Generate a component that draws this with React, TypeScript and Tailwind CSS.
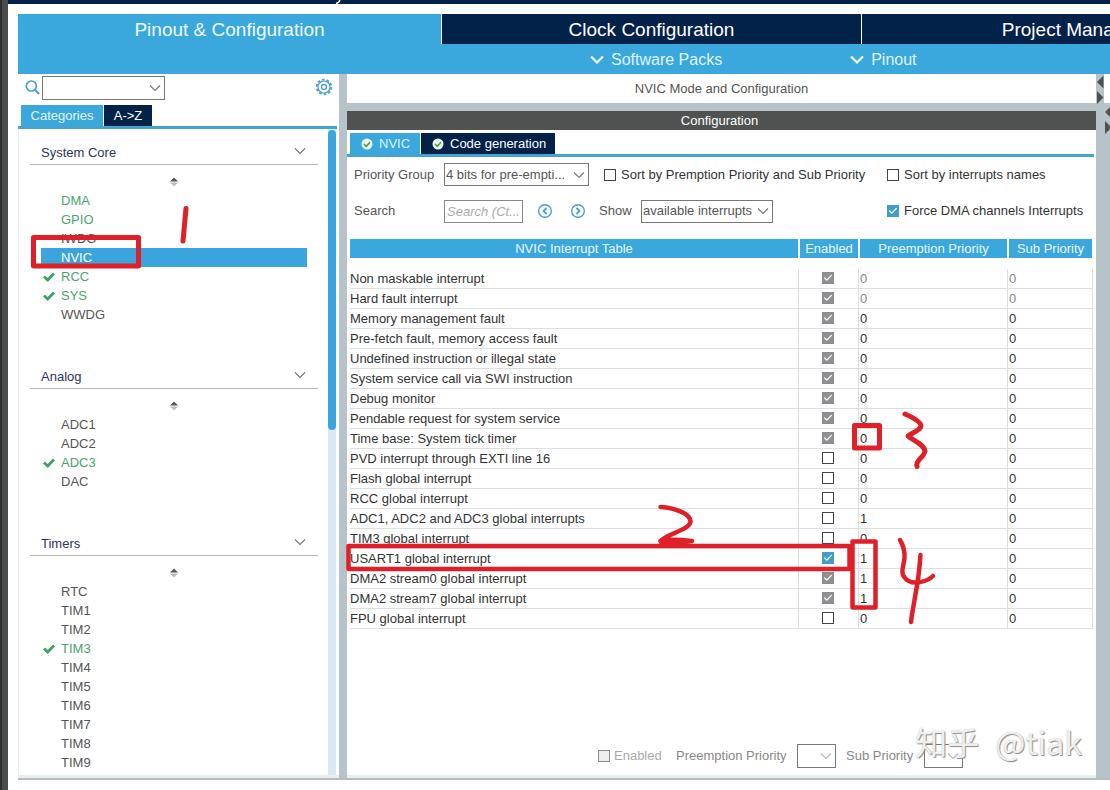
import { useState } from "react";
import clsx from "clsx";
import { Check } from "lucide-react";

type Peripheral = { name: string; status?: "partial" | "ok" };
type Interrupt = {
  name: string;
  enabled: boolean;
  locked?: boolean;
  fixed?: boolean;
  preemption: number;
};

const sections: { title: string; items: Peripheral[] }[] = [
  {
    title: "System Core",
    items: [
      { name: "DMA", status: "partial" },
      { name: "GPIO", status: "partial" },
      { name: "IWDG" },
      { name: "NVIC" },
      { name: "RCC", status: "ok" },
      { name: "SYS", status: "ok" },
      { name: "WWDG" },
    ],
  },
  {
    title: "Analog",
    items: [{ name: "ADC1" }, { name: "ADC2" }, { name: "ADC3", status: "ok" }, { name: "DAC" }],
  },
  {
    title: "Timers",
    items: [
      { name: "RTC" },
      { name: "TIM1" },
      { name: "TIM2" },
      { name: "TIM3", status: "ok" },
      { name: "TIM4" },
      { name: "TIM5" },
      { name: "TIM6" },
      { name: "TIM7" },
      { name: "TIM8" },
      { name: "TIM9" },
    ],
  },
];

const interrupts: Interrupt[] = [
  { name: "Non maskable interrupt", enabled: true, locked: true, fixed: true, preemption: 0 },
  { name: "Hard fault interrupt", enabled: true, locked: true, fixed: true, preemption: 0 },
  { name: "Memory management fault", enabled: true, locked: true, preemption: 0 },
  { name: "Pre-fetch fault, memory access fault", enabled: true, locked: true, preemption: 0 },
  { name: "Undefined instruction or illegal state", enabled: true, locked: true, preemption: 0 },
  { name: "System service call via SWI instruction", enabled: true, locked: true, preemption: 0 },
  { name: "Debug monitor", enabled: true, locked: true, preemption: 0 },
  { name: "Pendable request for system service", enabled: true, locked: true, preemption: 0 },
  { name: "Time base: System tick timer", enabled: true, locked: true, preemption: 0 },
  { name: "PVD interrupt through EXTI line 16", enabled: false, preemption: 0 },
  { name: "Flash global interrupt", enabled: false, preemption: 0 },
  { name: "RCC global interrupt", enabled: false, preemption: 0 },
  { name: "ADC1, ADC2 and ADC3 global interrupts", enabled: false, preemption: 1 },
  { name: "TIM3 global interrupt", enabled: false, preemption: 0 },
  { name: "USART1 global interrupt", enabled: true, preemption: 1 },
  { name: "DMA2 stream0 global interrupt", enabled: true, locked: true, preemption: 1 },
  { name: "DMA2 stream7 global interrupt", enabled: true, locked: true, preemption: 1 },
  { name: "FPU global interrupt", enabled: false, preemption: 0 },
];

function Checkbox({ id, label, checked, disabled }: { id: string; label?: string; checked?: boolean; disabled?: boolean }) {
  return (
    <span className="relative inline-flex size-3 shrink-0">
      <input
        id={id}
        type="checkbox"
        aria-label={label}
        defaultChecked={checked}
        disabled={disabled}
        className="peer size-3 appearance-none border border-[#444] bg-white checked:border-[#3f9fcb] checked:bg-[#3f9fcb] disabled:border-[#8b8b8f] disabled:bg-[#eee] checked:disabled:bg-[#8f8f94]"
      />
      <Check
        className="pointer-events-none absolute left-px top-px hidden size-[10px] text-white peer-checked:block"
        strokeWidth={3}
      />
    </span>
  );
}

function Combo({ label, id, value, className, disabled }: { label?: string; id?: string; value: string; className: string; disabled?: boolean }) {
  return (
    <span className={clsx("relative inline-flex shrink-0", className)}>
      <select
        id={id}
        aria-label={label}
        disabled={disabled}
        className="size-full appearance-none rounded-none border border-[#777] bg-white pl-px text-[13px] text-[#555] disabled:opacity-100"
      >
        <option>{value}</option>
      </select>
      <Chevron className={clsx("pointer-events-none absolute right-1 top-1/2 -mt-1", disabled && "opacity-50")} />
    </span>
  );
}

function Chevron({ className }: { className?: string }) {
  return (
    <svg viewBox="0 0 12 8" className={clsx("h-2 w-3 fill-none stroke-[#777]", className)} strokeWidth="1.2">
      <path d="M1 1.5 6 6.5 11 1.5" />
    </svg>
  );
}

function MenuChevron() {
  return (
    <svg viewBox="0 0 14 10" className="h-[10px] w-[14px] fill-none stroke-[#f2fbff]" strokeWidth="2.2">
      <path d="M1 1.5 7 7.500 13 1.5" />
    </svg>
  );
}

function TabDot() {
  return (
    <svg viewBox="0 0 12 12" className="size-3">
      <circle cx="6" cy="6" r="5.5" fill="#eafbe8" />
      <path d="M3 6 5.3 8.3 9 4.2" fill="none" stroke="#4a9b5e" strokeWidth="1.6" />
    </svg>
  );
}

function StepButton({ label, d }: { label: string; d: string }) {
  return (
    <button type="button" aria-label={label} className="size-4">
      <svg viewBox="0 0 16 16" className="size-4 fill-none stroke-[#4a9fcb]">
        <circle cx="8" cy="8" r="6.3" strokeWidth="1.4" />
        <path d={d} strokeWidth="1.8" />
      </svg>
    </button>
  );
}

function SplitArrows({ className }: { className?: string }) {
  return (
    <svg viewBox="0 0 8 30" className={clsx("h-[30px] w-2 shrink-0 fill-[#505252]", className)}>
      <path d="M7.5 1.5v13L1 8z" />
      <path d="M1 17v13l6.5-6.5z" />
    </svg>
  );
}

function Sidebar() {
  const [selected, setSelected] = useState("NVIC");

  return (
    <aside className="flex w-[321px] shrink-0 flex-col overflow-hidden bg-white">
      <div className="flex h-[31px] items-start pl-[7px] pt-0.5">
        <svg viewBox="0 0 16 16" className="mt-1 size-4 fill-none stroke-[#4a9fcb]">
          <circle cx="6.3" cy="6" r="5" strokeWidth="1.7" />
          <path d="M10 9.800 14 14" strokeWidth="2" />
        </svg>
        <Combo label="Search peripherals" value="" className="ml-px h-6 w-[123px]" />
        <button aria-label="Settings" className="ml-auto mr-1.5 mt-0.5">
          <svg viewBox="0 0 18 18" className="size-[18px] fill-none stroke-[#4a9fcb]">
            <circle cx="9" cy="9" r="7.300" strokeWidth="1.8" strokeDasharray="2.7 1.887" />
            <circle cx="9" cy="9" r="6" strokeWidth="1.2" />
            <circle cx="9" cy="9" r="2.500" strokeWidth="1.3" />
          </svg>
        </button>
      </div>
      <div className="mr-0.5 flex h-[24px] gap-px border-b-3 border-[#42a4cf] pl-[3px]">
        <button className="w-[82px] bg-[#3aa8dc] text-[#e2f6ff]">Categories</button>
        <button className="w-12 bg-[#02224a] text-white">A-&gt;Z</button>
      </div>
      <div className="flex min-h-0 flex-1 border-b-3 border-l border-[#eaeeef]">
        <div className="min-w-0 flex-1 overflow-hidden pl-[11px] pr-[10px]">
          {sections.map((section) => (
            <section key={section.title} className="pb-[29px]">
              <button className="flex h-9 w-full items-center justify-between border-b border-[#bbb] pl-[11px] pr-3 pt-3 text-[#2e3560]">
                {section.title}
                <Chevron className="mb-1" />
              </button>
              <div className="flex h-[26px] justify-center pr-px pt-3">
                <svg viewBox="0 0 8 10" className="h-[10px] w-2">
                  <path d="M0 4.5 4 .5l4 4z" fill="#555" />
                  <path d="M0 5.5h8l-4 4z" fill="#bbb" />
                </svg>
              </div>
              <ul className="pl-[11px] pr-[11px]">
                {section.items.map((item) => (
                  <li key={item.name}>
                    <button
                      onClick={() => setSelected(item.name)}
                      className={clsx(
                        "flex h-[19px] w-full items-center",
                        selected === item.name
                          ? "bg-[#3aa5dc] text-white"
                          : item.status
                            ? "text-[#4aa56c]"
                            : "text-[#555]",
                      )}
                    >
                      <span className="w-5 shrink-0 pl-0.5">
                        {item.status === "ok" && (
                          <svg viewBox="0 0 12 10" className="h-[10px] w-3 fill-none stroke-[#3f9f66]" strokeWidth="2.8">
                            <path d="M1 4.5 4.7 8 11 1.5" />
                          </svg>
                        )}
                      </span>
                      {item.name}
                    </button>
                  </li>
                ))}
              </ul>
            </section>
          ))}
        </div>
        <div className="mr-[3px] w-2 bg-[#dae8f2]">
          <div className="mt-px h-[300px] rounded-full bg-[#3aa5dc]" />
        </div>
      </div>
    </aside>
  );
}

function InterruptTable() {
  return (
    <table className="w-full table-fixed border-separate border-spacing-0 text-left text-[#333]">
      <colgroup>
        <col />
        <col className="w-[60px]" />
        <col className="w-[149px]" />
        <col className="w-[85px]" />
      </colgroup>
      <thead>
        <tr className="h-[19px] text-center text-[#e8f7ff]">
          <th className="border-r border-white bg-[#3aa8dc] font-normal">NVIC Interrupt Table</th>
          <th className="border-x border-white bg-[#3aa8dc] font-normal">Enabled</th>
          <th className="border-x border-white bg-[#3aa8dc] font-normal">Preemption Priority</th>
          <th className="border-x border-white bg-[#3aa8dc] font-normal">Sub Priority</th>
        </tr>
      </thead>
      <tbody>
        <tr className="h-[11px]">
          <td colSpan={4} />
        </tr>
        {interrupts.map((row, i) => (
          <tr key={row.name} className="h-5 leading-[19px]">
            <td className="truncate border-b border-r border-[#dcdfe0]">{row.name}</td>
            <td className="border-b border-r border-[#dcdfe0]">
              <div className="flex justify-center pb-px pr-0.5">
                <Checkbox id={`irq-${i}`} label={`Enable ${row.name}`} checked={row.enabled} disabled={row.locked} />
              </div>
            </td>
            <td className={clsx("border-b border-r border-[#dcdfe0] pl-px", row.fixed && "text-[#888]")}>{row.preemption}</td>
            <td className={clsx("border-b border-r border-[#dcdfe0] pl-px", row.fixed && "text-[#888]")}>0</td>
          </tr>
        ))}
      </tbody>
    </table>
  );
}

function ConfigPanel() {
  return (
    <main className="flex min-w-0 flex-1 flex-col">
      <h2 className="flex h-[29px] shrink-0 items-center justify-center bg-white text-[#555]">NVIC Mode and Configuration</h2>
      <div className="mt-2 flex min-h-0 flex-1 flex-col border-b-3 border-[#eaeeef] bg-white">
        <h3 className="flex h-[19px] shrink-0 items-center justify-center bg-[#505151] pr-1 text-white">Configuration</h3>
        <div className="mr-0.5 mt-[3px] flex h-[24px] shrink-0 gap-px border-b-3 border-[#42a4cf] pl-[3px]">
          <button className="flex w-[70px] items-center gap-1.5 bg-[#3aa8dc] pl-[11px] text-[#d8f3ff]">
            <TabDot />
            NVIC
          </button>
          <button className="flex w-[134px] items-center gap-1.5 bg-[#02224a] pl-[11px] text-white">
            <TabDot />
            Code generation
          </button>
        </div>
        <form className="grid shrink-0 grid-cols-[90px_1fr_207px] pl-[7px] pr-0.5 text-[#333]" onSubmit={(e) => e.preventDefault()}>
          <label htmlFor="priority-group" className="flex h-[35px] items-center text-[#555]">Priority Group</label>
          <div className="flex items-center">
            <Combo id="priority-group" value="4 bits for pre-empti..." className="h-[23px] w-[145px]" />
            <span className="ml-[15px] flex items-center gap-[5px]">
              <Checkbox id="sort-priority" />
              <label htmlFor="sort-priority" className="whitespace-nowrap">Sort by Premption Priority and Sub Priority</label>
            </span>
          </div>
          <div className="flex items-center gap-[5px]">
            <Checkbox id="sort-names" />
            <label htmlFor="sort-names">Sort by interrupts names</label>
          </div>
          <label htmlFor="search" className="flex h-[38px] items-center text-[#555]">Search</label>
          <div className="flex items-center">
            <input
              id="search"
              placeholder="Search (Ct..."
              className="h-[23px] w-[79px] border border-[#888] px-0.5 placeholder:italic placeholder:text-[#aaa]"
            />
            <span className="ml-[14px] flex gap-[17px]">
              <StepButton label="Previous" d="M9.5 5 6.5 8l3 3" />
              <StepButton label="Next" d="M6.5 5 9.5 8l-3 3" />
            </span>
            <label htmlFor="show" className="ml-[13px] w-[42px] text-[#555]">Show</label>
            <Combo id="show" value="available interrupts" className="h-[23px] w-[132px]" />
          </div>
          <div className="flex items-center gap-[5px]">
            <Checkbox id="force-dma" checked />
            <label htmlFor="force-dma">Force DMA channels Interrupts</label>
          </div>
        </form>
        <div className="mt-[9px] pl-[3px] pr-[3px]">
          <InterruptTable />
        </div>
        <div className="mt-auto flex items-center pb-[7px] pl-[251px] text-[#888]">
          <Checkbox id="row-enabled" disabled />
          <label htmlFor="row-enabled" className="ml-1 w-[62px] text-[#aaa]">Enabled</label>
          <label htmlFor="row-preemption" className="w-[121px]">Preemption Priority</label>
          <Combo id="row-preemption" value="" disabled className="h-6 w-[39px]" />
          <label htmlFor="row-sub" className="ml-[10px] w-[78px]">Sub Priority</label>
          <Combo id="row-sub" value="" disabled className="h-6 w-[39px]" />
        </div>
      </div>
    </main>
  );
}

// Hand drawn steps 1-4 over the window
function Annotations() {
  return (
    <svg
      className="pointer-events-none absolute left-0 top-0 fill-none stroke-[#df2029]"
      width="1110"
      height="790"
      strokeWidth="5"
      strokeLinecap="round"
      strokeLinejoin="round"
    >
      <rect x="33.5" y="237.5" width="105" height="28.5" />
      <path d="M186 208.500 183 241" />
      <rect x="348.500" y="546" width="501" height="23" strokeWidth="4.500" />
      <path d="M660.500 507C676 508 691 514 690.500 522C688 531 668 533 660.500 541C668 539 682 540 692 541C682 543 670 543 661 542" strokeWidth="4.500" />
      <rect x="854.500" y="425.500" width="25" height="22.500" />
      <path d="M905 414C914 418 921 422 921 426C920 431 911 433 908 436C912 440 924 444 925 451C924 458 915 460 917 466.500" />
      <rect x="852.500" y="541.500" width="23" height="66" strokeWidth="4.500" />
      <path d="M900 540C903 545 905 551 904.500 558C904 564 901 571 903 575C906 581 912 583 917 582.500C923 582 929 580 933 576" strokeWidth="4.500" />
      <path d="M920.500 555C919 575 917 587 915.500 594C914 604 912 613 911 622" strokeWidth="4.500" />
    </svg>
  );
}

export default function App() {
  return (
    <div className="relative flex h-screen overflow-hidden bg-white font-['Liberation_Sans',Arial,sans-serif] text-[13px] leading-4">
      <div className="w-2 shrink-0 border-l-2 border-[#2c2e2f] bg-[#4b4d4d]" />
      <div className="flex min-w-0 flex-1 flex-col">
        <div className="h-1 shrink-0 bg-[#02224a]">
          <svg viewBox="0 0 6 4" className="ml-[327px] h-1 w-1.5 fill-none stroke-white" strokeWidth="1.5">
            <path d="M5 0 3.500 2.500 1 3.500" />
          </svg>
        </div>
        <div className="ml-[10px] mt-[10px] flex min-h-0 flex-1 flex-col">
          <nav className="flex h-[30px] shrink-0 gap-px overflow-hidden text-[19px]">
            <button className="w-[423px] shrink-0 bg-[#3aa8dc] pt-0.5 text-[#effaff]">Pinout &amp; Configuration</button>
            <button className="w-[419px] shrink-0 bg-[#02224a] pt-0.5 text-white">Clock Configuration</button>
            <button className="w-[419px] shrink-0 bg-[#02224a] pt-0.5 text-white">Project Manager</button>
          </nav>
          <div className="flex h-[30px] shrink-0 items-center gap-[128px] bg-[#3aa8dc] pl-[572px] pt-0.5 text-base text-[#dff5ff]">
            <button className="flex items-center gap-[7px]">
              <MenuChevron />
              Software Packs
            </button>
            <button className="flex items-center gap-[7px]">
              <MenuChevron />
              Pinout
            </button>
          </div>
          <div className="flex min-h-0 flex-1 bg-[#b7c2c9]">
            <Sidebar />
            <div className="w-2 shrink-0" />
            <ConfigPanel />
            <SplitArrows />
            <div className="w-1.5 shrink-0 overflow-hidden">
              <div className="h-[29px] bg-white" />
              <SplitArrows className="mt-px" />
            </div>
          </div>
          <div className="mb-[10px] h-0.5 shrink-0 bg-[#b5bcbf]" />
        </div>
      </div>
      <Annotations />
      <p className="pointer-events-none absolute bottom-[29px] right-7 flex gap-4 whitespace-nowrap font-['Noto_Sans_CJK_SC',sans-serif] text-[32px] leading-10 text-white/85 [text-shadow:1px_1px_1px_#888,0_0_1px_#aaa]">
        <span>知乎</span>
        <span>@tiak</span>
      </p>
    </div>
  );
}
